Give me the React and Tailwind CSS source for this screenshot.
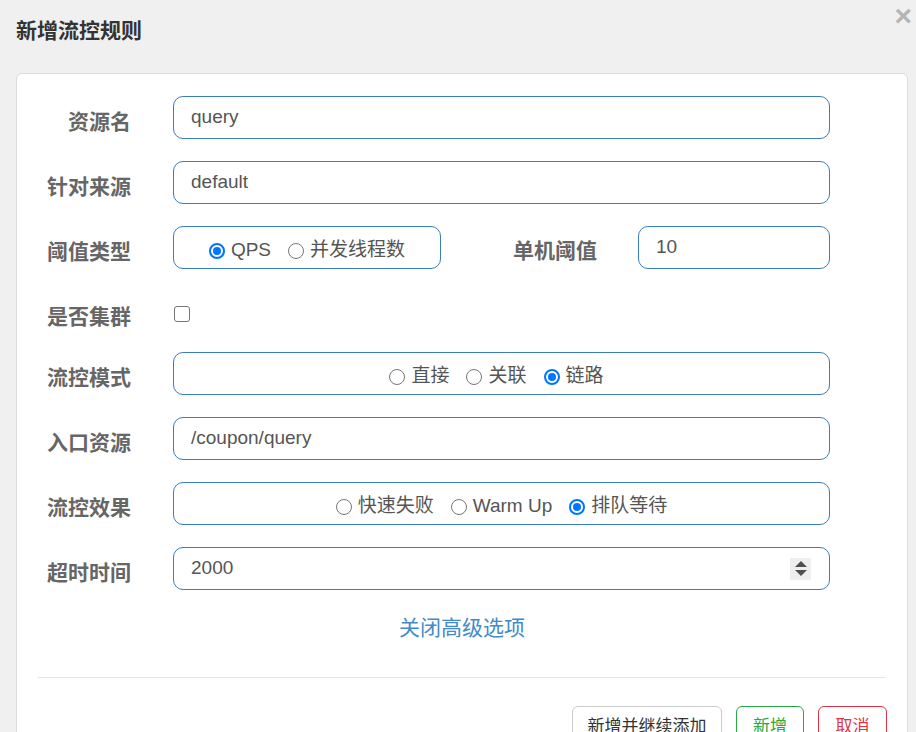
import React from "react";

const FONT = { fontFamily: '"Liberation Sans", Arial, "Noto Sans CJK SC", sans-serif' };

function Radio({ checked }) {
  if (checked) {
    return (
      <span className="inline-flex w-4 h-4 shrink-0 rounded-full border-2 border-[#0075ff] bg-white items-center justify-center">
        <span className="w-2 h-2 rounded-full bg-[#0075ff]" />
      </span>
    );
  }
  return <span className="inline-block w-4 h-4 shrink-0 rounded-full border border-[#767676] bg-white" />;
}

function RadioItem({ checked, label, last }) {
  return (
    <span className={"flex items-center " + (last ? "" : "mr-[17px]")}>
      <Radio checked={checked} />
      <span className="ml-[6px]">{label}</span>
    </span>
  );
}

function Label({ children }) {
  return (
    <div className="w-[114px] shrink-0 text-right text-[21px] font-bold text-[#666] leading-[24px] pt-[9px] whitespace-nowrap">
      {children}
    </div>
  );
}

function Row({ label, children, mb = "mb-[22px]" }) {
  return (
    <div className={"flex items-center h-[43px] " + mb}>
      <Label>{label}</Label>
      <div className="ml-[42px] flex items-center">{children}</div>
    </div>
  );
}

const boxCls =
  "h-[43px] border border-[#3a7cc0] rounded-[10px] bg-white flex items-center text-[19px] text-[#555]";

export default function App() {
  return (
    <div className="w-[916px] h-[732px] overflow-hidden bg-[#f0f0f0] relative" style={FONT}>
      <div className="absolute right-[4px] top-[1px] text-[30px] leading-[30px] font-bold text-[#b5b5b5]">×</div>
      <div className="h-[73px] pl-4 pt-[19px]">
        <div className="text-[21px] leading-[24px] font-bold text-[#333]">新增流控规则</div>
      </div>
      <div className="ml-4 w-[892px] h-[700px] border border-[#dcdcdc] rounded-[6px] bg-white pt-[22px]">
        <Row label="资源名">
          <div className={boxCls + " w-[657px] pl-[17px]"}>query</div>
        </Row>
        <Row label="针对来源">
          <div className={boxCls + " w-[657px] pl-[17px]"}>default</div>
        </Row>
        <div className="flex items-center h-[43px] mb-[22px]">
          <Label>阈值类型</Label>
          <div className="ml-[42px] flex items-center">
            <div className={boxCls + " w-[268px] justify-center pt-[6px]"}>
              <RadioItem checked label="QPS" />
              <RadioItem label="并发线程数" last />
            </div>
            <div className="ml-[72px] w-[84px] text-[21px] font-bold text-[#666] leading-[24px] pt-[6px] whitespace-nowrap">
              单机阈值
            </div>
            <div className={boxCls + " ml-[41px] w-[192px] pl-[17px]"}>10</div>
          </div>
        </div>
        <Row label="是否集群" mb="mb-[18px]">
          <span className="inline-block w-4 h-4 rounded-[3px] border border-[#767676] bg-white ml-[1px] mt-[3px]" />
        </Row>
        <Row label="流控模式">
          <div className={boxCls + " w-[657px] justify-center pt-[6px] pr-[10px]"}>
            <RadioItem label="直接" />
            <RadioItem label="关联" />
            <RadioItem checked label="链路" last />
          </div>
        </Row>
        <Row label="入口资源">
          <div className={boxCls + " w-[657px] pl-[17px]"}>/coupon/query</div>
        </Row>
        <Row label="流控效果">
          <div className={boxCls + " w-[657px] justify-center pt-[6px]"}>
            <RadioItem label="快速失败" />
            <RadioItem label="Warm Up" />
            <RadioItem checked label="排队等待" last />
          </div>
        </Row>
        <div className="flex items-center h-[43px]">
          <Label>超时时间</Label>
          <div className="ml-[42px] flex items-center">
            <div className={boxCls + " w-[657px] pl-[17px] pr-[18px] justify-between"}>
              <span>2000</span>
              <span className="w-[21px] h-[22px] bg-[#efefef] flex flex-col items-center justify-center gap-[3px]">
                <span className="w-0 h-0 border-l-[6px] border-r-[6px] border-b-[6px] border-l-transparent border-r-transparent border-b-[#505050]" />
                <span className="w-0 h-0 border-l-[6px] border-r-[6px] border-t-[6px] border-l-transparent border-r-transparent border-t-[#505050]" />
              </span>
            </div>
          </div>
        </div>
        <div className="flex justify-center mt-[25px] h-[26px] items-center">
          <span className="text-[21px] text-[#428bca] leading-[24px]">关闭高级选项</span>
        </div>
        <div className="mx-[21px] mt-[36px] border-t border-[#e5e5e5]" />
        <div className="flex justify-end pr-[20px] pt-[28px] gap-[14px]">
          <div className="h-[42px] w-[150px] border border-[#cccccc] rounded-[6px] text-[17px] text-[#333] flex items-center justify-center">
            新增并继续添加
          </div>
          <div className="h-[42px] w-[68px] border border-[#28a745] rounded-[6px] text-[17px] text-[#28a745] flex items-center justify-center">
            新增
          </div>
          <div className="h-[42px] w-[69px] border border-[#dc3545] rounded-[6px] text-[17px] text-[#dc3545] flex items-center justify-center">
            取消
          </div>
        </div>
      </div>
    </div>
  );
}
